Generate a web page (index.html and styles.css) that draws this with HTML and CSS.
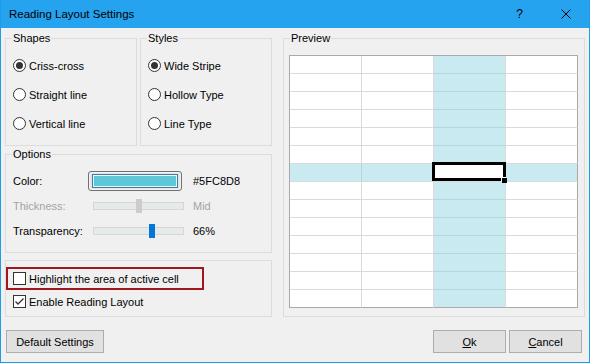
FILE: index.html
```html
<html>
<head>
<link rel="stylesheet" href="styles.css">
</head>
<body>
<div class="window">
  <div class="titlebar">
    <span class="title">Reading Layout Settings</span>
    <span class="help">?</span>
    <svg class="close" width="10" height="10" viewBox="0 0 10 10">
      <path d="M0.5 0.5 L9.5 9.5 M9.5 0.5 L0.5 9.5" stroke="#000" stroke-width="1" fill="none"/>
    </svg>
  </div>

  <div class="body">
    <div class="left">
      <div class="top-groups">
        <fieldset class="group radios">
          <legend>Shapes</legend>
          <div class="radio on"><span class="circle"></span>Criss-cross</div>
          <div class="radio"><span class="circle"></span>Straight line</div>
          <div class="radio"><span class="circle"></span>Vertical line</div>
        </fieldset>
        <fieldset class="group radios">
          <legend>Styles</legend>
          <div class="radio on"><span class="circle"></span>Wide Stripe</div>
          <div class="radio"><span class="circle"></span>Hollow Type</div>
          <div class="radio"><span class="circle"></span>Line Type</div>
        </fieldset>
      </div>

      <fieldset class="group options">
        <legend>Options</legend>
        <div class="opt-grid">
          <span>Color:</span>
          <span class="color-btn"><span class="swatch"></span></span>
          <span>#5FC8D8</span>

          <span class="disabled">Thickness:</span>
          <span class="slider"><span class="thumb thick"></span></span>
          <span class="disabled">Mid</span>

          <span>Transparency:</span>
          <span class="slider"><span class="thumb trans"></span></span>
          <span>66%</span>
        </div>
      </fieldset>

      <div class="group checks">
        <div class="check-row marked"><span class="box"></span>Highlight the area of active cell</div>
        <div class="check-row"><span class="box"><svg width="11" height="11" viewBox="0 0 11 11"><path d="M1.5 5.5 L4 8 L9.5 2.5" stroke="#333" stroke-width="1.3" fill="none"/></svg></span>Enable Reading Layout</div>
      </div>

      <div class="buttons">
        <button class="btn wide">Default Settings</button>
      </div>
    </div>

    <div class="right">
      <fieldset class="group preview">
        <legend>Preview</legend>
        <div class="sheet">
          <div></div><div></div><div class="hc"></div><div></div>
          <div></div><div></div><div class="hc"></div><div></div>
          <div></div><div></div><div class="hc"></div><div></div>
          <div></div><div></div><div class="hc"></div><div></div>
          <div></div><div></div><div class="hc"></div><div></div>
          <div></div><div></div><div class="hc"></div><div></div>
          <div class="hr"></div><div class="hr"></div><div class="active"><span class="frame"></span><span class="handle"></span></div><div class="hr"></div>
          <div></div><div></div><div class="hc"></div><div></div>
          <div></div><div></div><div class="hc"></div><div></div>
          <div></div><div></div><div class="hc"></div><div></div>
          <div></div><div></div><div class="hc"></div><div></div>
          <div></div><div></div><div class="hc"></div><div></div>
          <div></div><div></div><div class="hc"></div><div></div>
          <div></div><div></div><div class="hc"></div><div></div>
        </div>
      </fieldset>

      <div class="buttons end">
        <button class="btn"><u>O</u>k</button>
        <button class="btn"><u>C</u>ancel</button>
      </div>
    </div>
  </div>
</div>
</body>
</html>
```

FILE: styles.css
```css
body {
  margin: 0;
  padding: 0;
  font-family: "Liberation Sans", Arial, sans-serif;
  font-size: 11px;
  color: #000;
}

.window {
  width: 590px;
  height: 363px;
  box-sizing: border-box;
  border: 1px solid #1e9beb;
  border-top: 0;
  background: #f0f0f0;
}

.titlebar {
  height: 28px;
  background: #25a3ef;
  display: flex;
  align-items: center;
  padding-left: 8px;
}

.title {
  font-size: 11.5px;
}

.help {
  margin-left: auto;
  font-size: 12px;
}

.close {
  margin-left: 38px;
  margin-right: 18px;
}

.body {
  display: flex;
  gap: 11px;
  padding: 3px 4px 0 4px;
}

.left {
  width: 267px;
  display: flex;
  flex-direction: column;
}

.right {
  width: 302px;
  display: flex;
  flex-direction: column;
}

.group {
  margin: 0;
  padding: 0;
  min-width: 0;
  border: 1px solid #dcdcdc;
}

.group legend {
  margin-left: -1px;
  padding: 0 1px;
  line-height: 15px;
  font-size: 11px;
}

/* shapes / styles */

.top-groups {
  display: flex;
  gap: 3px;
}

.radios {
  width: 132px;
  box-sizing: border-box;
  padding: 5px 0 7px 7px;
}

.radio {
  height: 29px;
  display: flex;
  align-items: center;
  gap: 3px;
}

.circle {
  width: 13px;
  height: 13px;
  box-sizing: border-box;
  border: 1px solid #333;
  border-radius: 50%;
  background: #fff;
  display: flex;
  align-items: center;
  justify-content: center;
}

.radio.on .circle::after {
  content: "";
  width: 7px;
  height: 7px;
  border-radius: 50%;
  background: #333;
}

/* options */

.options {
  margin-top: 1px;
  padding: 6px 0 9px 7px;
}

.opt-grid {
  display: grid;
  grid-template-columns: 67px 97px auto;
  grid-auto-rows: 25px;
  column-gap: 8px;
  align-items: center;
}

.disabled {
  color: #a3a3a3;
}

.color-btn {
  width: 94px;
  height: 20px;
  box-sizing: border-box;
  border: 1px solid #6f6f6f;
  border-radius: 3px;
  background: #e5e5e5;
  padding: 2px 3px;
  box-shadow: inset 0 0 0 1px #f4f4f4;
  display: flex;
}

.swatch {
  flex: 1;
  background: #5fc8d8;
  border: 1px solid #3f7ea8;
  box-shadow: inset 0 0 0 1px #e9f6f8;
}

.slider {
  position: relative;
  margin-left: 5px;
  width: 91px;
  height: 8px;
  box-sizing: border-box;
  background: #e7eaea;
  border: 1px solid #d6d6d6;
}

.thumb {
  position: absolute;
  top: -4px;
  width: 6px;
  height: 14px;
}

.thumb.thick {
  left: 42px;
  background: #cccccc;
}

.thumb.trans {
  left: 55px;
  background: #0078d7;
}

/* checkboxes */

.checks {
  margin-top: 7px;
  padding: 6px 0 3px 0;
}

.check-row {
  height: 23px;
  box-sizing: border-box;
  display: flex;
  align-items: center;
  gap: 3px;
  padding-left: 7px;
}

.check-row.marked {
  width: 198px;
  border: 2px solid #a0171d;
  padding-left: 5px;
}

.box {
  width: 13px;
  height: 13px;
  box-sizing: border-box;
  border: 1px solid #333;
  background: #fff;
  display: flex;
  align-items: center;
  justify-content: center;
}

/* buttons */

.buttons {
  margin-top: 13px;
  display: flex;
  gap: 3px;
}

.buttons.end {
  justify-content: flex-end;
  padding-right: 3px;
}

.btn {
  width: 73px;
  height: 23px;
  padding: 0;
  font-family: "Liberation Sans", Arial, sans-serif;
  font-size: 11px;
  color: #000;
  background: #e1e1e1;
  border: 1px solid #adadad;
}

.btn.wide {
  width: 98px;
  margin-left: 1px;
}

/* preview sheet */

.preview {
  padding: 9px 0 8px 5px;
}

.preview legend {
  margin-left: 1px;
}

.sheet {
  width: 289px;
  box-sizing: border-box;
  display: grid;
  grid-template-columns: repeat(4, 72px);
  grid-auto-rows: 18px;
  border-top: 1px solid #a9a9a9;
  border-left: 1px solid #a9a9a9;
  background: #fff;
}

.sheet div {
  border-right: 1px solid #dadada;
  border-bottom: 1px solid #dadada;
}

.sheet div:nth-child(4n) {
  border-right-color: #a9a9a9;
}

.sheet div:nth-child(n+53) {
  border-bottom-color: #a9a9a9;
}

.sheet .hc {
  background: #c8eaf0;
  border-bottom-color: #b7d6dc;
}

.sheet .hr {
  background: #c8eaf0;
  border-right-color: #b7d6dc;
}

.sheet .active {
  position: relative;
  background: #fff;
}

.frame {
  position: absolute;
  top: -2px;
  left: -2px;
  right: -1px;
  bottom: 0;
  border: 3px solid #000;
}

.handle {
  position: absolute;
  right: -2px;
  bottom: -2px;
  width: 5px;
  height: 5px;
  background: #000;
  box-shadow: -1px -1px 0 #fff;
}
```
